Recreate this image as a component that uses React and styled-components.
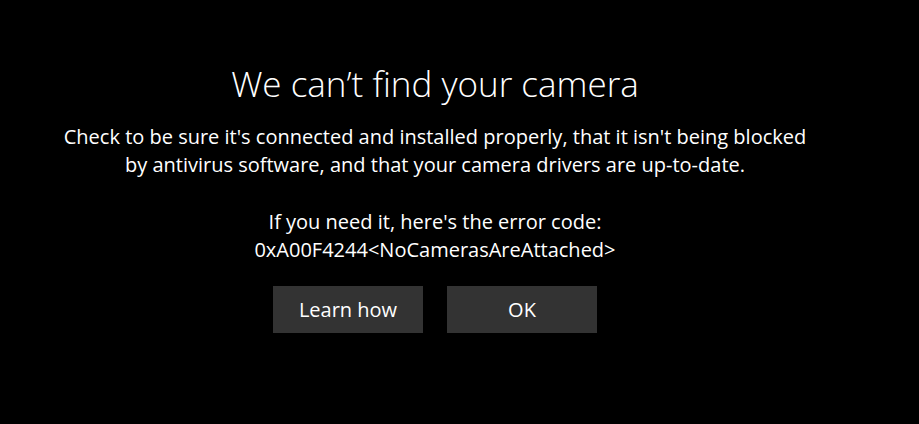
import React from "react";
import styled, { createGlobalStyle } from "styled-components";

const Global = createGlobalStyle`
  html, body { margin: 0; padding: 0; background: #000; }
  body { font-family: "Open Sans", "Noto Sans", sans-serif; color: #fff; }
`;

const Screen = styled.div`
  width: 919px;
  height: 424px;
  background: #000;
  overflow: hidden;
`;

const Dialog = styled.div`
  width: 870px;
  padding-top: 64px;
  display: flex;
  flex-direction: column;
  align-items: center;
  text-align: center;
`;

const Title = styled.h1`
  margin: 0;
  font-size: 35px;
  line-height: 40px;
  font-weight: 300;
  color: #fff;
`;

const Para = styled.p`
  margin: ${(p) => p.$top}px 0 0;
  font-size: 20px;
  line-height: 28px;
  font-weight: 400;
  color: #fff;
`;

const Actions = styled.div`
  margin-top: 22px;
  display: flex;
  gap: 24px;
`;

const Button = styled.button`
  width: 150px;
  height: 47px;
  border: none;
  background: #333333;
  color: #fff;
  font-family: inherit;
  font-size: 20px;
  padding: 0;
`;

export default function App() {
  return (
    <>
      <Global />
      <Screen>
        <Dialog>
          <Title>We can’t find your camera</Title>
          <Para $top={19}>
            Check to be sure it's connected and installed properly, that it isn't being blocked
            <br />
            by antivirus software, and that your camera drivers are up-to-date.
          </Para>
          <Para $top={29}>
            If you need it, here's the error code:
            <br />
            0xA00F4244&lt;NoCamerasAreAttached&gt;
          </Para>
          <Actions>
            <Button>Learn how</Button>
            <Button>OK</Button>
          </Actions>
        </Dialog>
      </Screen>
    </>
  );
}
